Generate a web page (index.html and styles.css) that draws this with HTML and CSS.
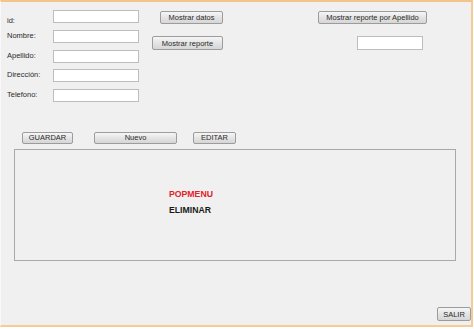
FILE: index.html
```html
<!DOCTYPE html>
<html lang="es">
<head>
<meta charset="utf-8">
<title>Formulario</title>
<link rel="stylesheet" href="styles.css">
</head>
<body>
<div class="frame">
  <div class="top">
    <div class="form">
      <label class="lbl lbl-id">id:</label><input class="field" type="text">
      <label class="lbl">Nombre:</label><input class="field" type="text">
      <label class="lbl">Apellido:</label><input class="field" type="text">
      <label class="lbl">Dirección:</label><input class="field" type="text">
      <label class="lbl">Telefono:</label><input class="field" type="text">
    </div>
    <div class="col-mid">
      <button class="btn btn-datos">Mostrar datos</button>
      <button class="btn btn-reporte">Mostrar reporte</button>
    </div>
    <div class="col-right">
      <button class="btn btn-apellido">Mostrar reporte por Apellido</button>
      <input class="field field-small" type="text">
    </div>
  </div>
  <div class="actions">
    <button class="btn btn-guardar">GUARDAR</button>
    <button class="btn btn-nuevo">Nuevo</button>
    <button class="btn btn-editar">EDITAR</button>
  </div>
  <div class="panel">
    <div class="menu">
      <div class="menu-title">POPMENU</div>
      <div class="menu-item">ELIMINAR</div>
    </div>
  </div>
  <button class="btn btn-salir">SALIR</button>
</div>
</body>
</html>
```
FILE: styles.css
```css
html, body {
  margin: 0;
  padding: 0;
  background: #ffffff;
}
body {
  font-family: "Liberation Sans", Arial, sans-serif;
  font-size: 7.5px;
  color: #2a2a2a;
}
.frame {
  box-sizing: border-box;
  width: 473px;
  height: 327px;
  background: #f0f0f0;
  border-top: 2px solid #f4c48c;
  border-right: 2px solid #f6cb96;
  border-bottom: 2px solid #f6cb96;
  border-left: 1px solid #f8f8f8;
  display: flex;
  flex-direction: column;
}
.top {
  display: flex;
  align-items: flex-start;
  padding: 8px 0 0 6px;
}
.form {
  display: grid;
  grid-template-columns: 46px 86px;
  grid-auto-rows: 13px;
  row-gap: 6.75px;
}
.lbl {
  line-height: 11px;
  white-space: nowrap;
}
.lbl-id {
  padding-top: 5px;
}
.field {
  box-sizing: border-box;
  margin: 0;
  padding: 0;
  width: 86px;
  height: 13px;
  background: #ffffff;
  border: 1px solid #bdbdbd;
  border-radius: 0;
  outline: none;
}
.btn {
  box-sizing: border-box;
  margin: 0;
  padding: 0;
  height: 13px;
  font-family: "Liberation Sans", Arial, sans-serif;
  font-size: 7.5px;
  color: #2a2a2a;
  line-height: 11px;
  text-align: center;
  white-space: nowrap;
  background: linear-gradient(#f6f6f6, #e4e4e4 50%, #d6d6d6);
  border: 1px solid #9c9c9c;
  border-radius: 2px;
}
.col-mid {
  display: flex;
  flex-direction: column;
  align-items: flex-end;
  gap: 12px;
  width: 84px;
  margin-top: 1px;
}
.btn-datos { width: 63px; }
.btn-reporte { width: 71px; height: 14px; }
.col-right {
  display: flex;
  flex-direction: column;
  align-items: flex-end;
  gap: 12px;
  width: 109px;
  margin-left: 95px;
  margin-top: 1px;
}
.btn-apellido { width: 109px; }
.field-small {
  width: 66px;
  height: 14px;
  margin-right: 4px;
}
.actions {
  display: flex;
  align-items: center;
  margin-top: 30px;
  padding-left: 21px;
}
.actions .btn { height: 12px; line-height: 10px; }
.btn-guardar { width: 51px; }
.btn-nuevo { width: 83px; margin-left: 21px; }
.btn-editar { width: 43px; margin-left: 16px; }
.panel {
  box-sizing: border-box;
  width: 442px;
  height: 112px;
  margin: 5px 0 0 13px;
  border: 1px solid #a9a9a9;
  background: #f0f0f0;
  padding: 36px 0 0 154px;
}
.menu {
  font-size: 8.7px;
  font-weight: bold;
  line-height: 16px;
}
.menu-title { color: #e2202c; }
.menu-item { color: #1a1a1a; }
.btn-salir {
  width: 34px;
  height: 14px;
  margin-top: auto;
  margin-bottom: 4px;
  align-self: flex-end;
}
```
